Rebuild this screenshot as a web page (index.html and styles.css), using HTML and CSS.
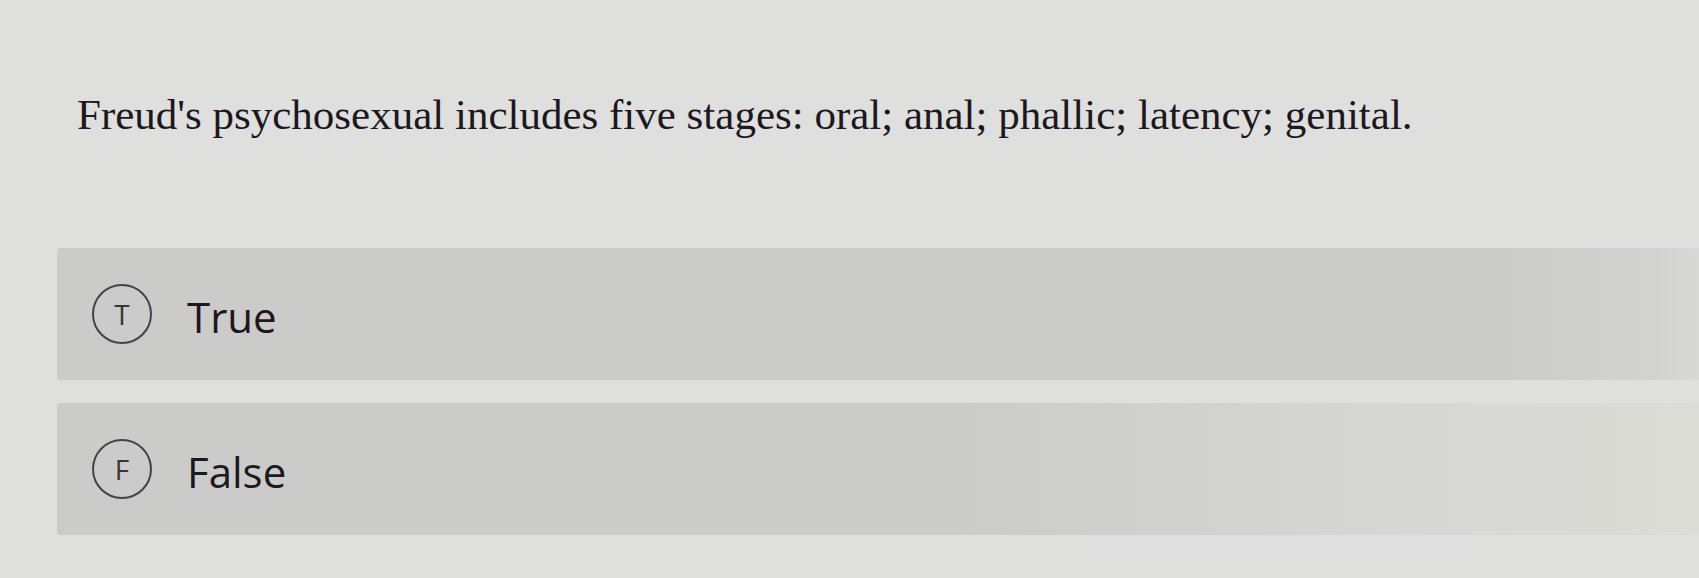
FILE: index.html
```html
<!DOCTYPE html>
<html lang="en">
<head>
<meta charset="utf-8">
<title>Question</title>
<link rel="stylesheet" href="styles.css">
</head>
<body>
<main class="page">
  <p class="question">Freud's psychosexual includes five stages: oral; anal; phallic; latency; genital.</p>
  <div class="options">
    <div class="option option-first">
      <span class="badge">T</span>
      <span class="label">True</span>
    </div>
    <div class="option option-second">
      <span class="badge">F</span>
      <span class="label">False</span>
    </div>
  </div>
</main>
</body>
</html>
```

FILE: styles.css
```css
html, body {
  margin: 0;
  padding: 0;
}

body {
  background: #dfdfdd;
  width: 1699px;
  height: 578px;
  overflow: hidden;
}

.page {
  padding-top: 90px;
}

.question {
  margin: 0 0 108px 0;
  padding-left: 77px;
  font-family: "Liberation Serif", "Times New Roman", serif;
  font-size: 43px;
  line-height: 50px;
  color: #1c1822;
  white-space: nowrap;
}

.options {
  margin-left: 57px;
  display: flex;
  flex-direction: column;
  gap: 23px;
}

.option {
  height: 132px;
  background: #cbcbc9;
  border-radius: 3px 0 0 3px;
  display: flex;
  align-items: center;
  padding-left: 35px;
  box-sizing: border-box;
}

.option-first {
  background: linear-gradient(to right, #cbcbc9 88%, #d2d2cf 97%, #d8d8d4 100%);
}

.option-second {
  background: linear-gradient(to right, #cbcbc9 55%, #d6d6d2 80%, #dcdcd7 100%);
}

.badge {
  width: 60px;
  height: 60px;
  box-sizing: border-box;
  border: 2.5px solid #45424b;
  border-radius: 50%;
  display: flex;
  align-items: center;
  justify-content: center;
  font-family: "Open Sans", "Noto Sans", sans-serif;
  font-size: 28px;
  color: #38363d;
  flex: none;
}

.label {
  margin-left: 35px;
  padding-top: 4px;
  font-family: "Open Sans", "Noto Sans", sans-serif;
  font-size: 42px;
  color: #1c1822;
}
```
